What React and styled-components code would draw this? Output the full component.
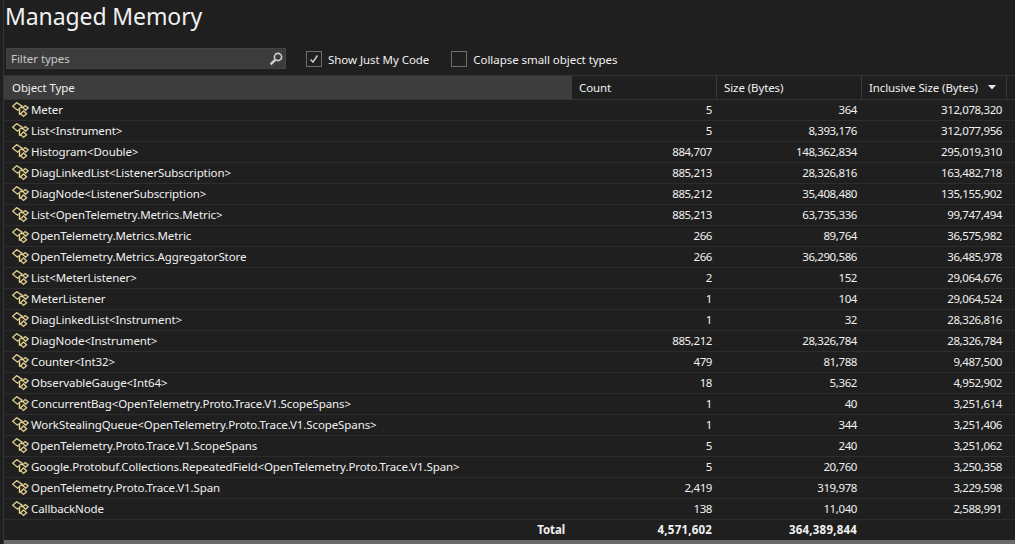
import React from 'react';
import styled, { createGlobalStyle } from 'styled-components';

const rows = [
	['Meter', '5', '364', '312,078,320'],
	['List<Instrument>', '5', '8,393,176', '312,077,956'],
	['Histogram<Double>', '884,707', '148,362,834', '295,019,310'],
	['DiagLinkedList<ListenerSubscription>', '885,213', '28,326,816', '163,482,718'],
	['DiagNode<ListenerSubscription>', '885,212', '35,408,480', '135,155,902'],
	['List<OpenTelemetry.Metrics.Metric>', '885,213', '63,735,336', '99,747,494'],
	['OpenTelemetry.Metrics.Metric', '266', '89,764', '36,575,982'],
	['OpenTelemetry.Metrics.AggregatorStore', '266', '36,290,586', '36,485,978'],
	['List<MeterListener>', '2', '152', '29,064,676'],
	['MeterListener', '1', '104', '29,064,524'],
	['DiagLinkedList<Instrument>', '1', '32', '28,326,816'],
	['DiagNode<Instrument>', '885,212', '28,326,784', '28,326,784'],
	['Counter<Int32>', '479', '81,788', '9,487,500'],
	['ObservableGauge<Int64>', '18', '5,362', '4,952,902'],
	['ConcurrentBag<OpenTelemetry.Proto.Trace.V1.ScopeSpans>', '1', '40', '3,251,614'],
	['WorkStealingQueue<OpenTelemetry.Proto.Trace.V1.ScopeSpans>', '1', '344', '3,251,406'],
	['OpenTelemetry.Proto.Trace.V1.ScopeSpans', '5', '240', '3,251,062'],
	['Google.Protobuf.Collections.RepeatedField<OpenTelemetry.Proto.Trace.V1.Span>', '5', '20,760', '3,250,358'],
	['OpenTelemetry.Proto.Trace.V1.Span', '2,419', '319,978', '3,229,598'],
	['CallbackNode', '138', '11,040', '2,588,991'],
];

const GlobalStyle = createGlobalStyle`
	html, body {
		margin: 0;
		height: 100%;
		background: #1f1f1f;
		overflow: hidden;
	}
`;

const Page = styled.div`
	display: flex;
	flex-direction: column;
	width: 1015px;
	height: 544px;
	box-sizing: border-box;
	padding-left: 3px;
	background: #1f1f1f;
	color: #f1f1f1;
	font-family: "Noto Sans", "Open Sans", sans-serif;
	font-size: 11.5px;
	letter-spacing: -0.1px;
`;

const Content = styled.div`
	flex: 1;
	display: flex;
	flex-direction: column;
	min-height: 0;
	border-left: 1px solid #333;
`;

const Title = styled.h1`
	margin: 0;
	height: 48px;
	padding-left: 1px;
	font-size: 23px;
	font-weight: 400;
	line-height: 32px;
	letter-spacing: -0.1px;
`;

const Toolbar = styled.div`
	display: flex;
	align-items: flex-start;
	height: 27px;
	padding-left: 2px;
	letter-spacing: -0.05px;
`;

const Search = styled.div`
	display: flex;
	align-items: center;
	justify-content: space-between;
	box-sizing: border-box;
	width: 280px;
	height: 21px;
	padding: 0 1px 0 4px;
	background: #3c3c3c;
	border: 1px solid #434343;
	color: #c8c8c8;
`;

const Check = styled.label`
	display: flex;
	align-items: center;
	gap: 6px;
	height: 22px;
	margin-left: ${(p) => p.$gap}px;
`;

const Box = styled.span`
	display: flex;
	align-items: center;
	justify-content: center;
	box-sizing: border-box;
	width: 16px;
	height: 16px;
	border: 1px solid #6e6e6e;
`;

const Row = styled.div`
	display: grid;
	grid-template-columns: 568px 145px 145px 145px 8px;
	height: ${(p) => p.$height}px;
	box-sizing: border-box;
	border-bottom: ${(p) => (p.$plain ? 'none' : '1px solid #2d2d2d')};
`;

const HeaderRow = styled(Row)`
	border-top: 1px solid #333;
	border-bottom: 1px solid #333;
`;

const HeaderCell = styled.div`
	display: flex;
	align-items: center;
	gap: 10px;
	padding: 0 0 1px ${(p) => (p.$first ? '8px' : '7px')};
	background: ${(p) => (p.$first ? '#3d3d3d' : 'transparent')};
	border-right: ${(p) => (p.$first ? 'none' : '1px solid #3a3a3a')};
`;

const NameCell = styled.div`
	display: flex;
	align-items: center;
	gap: 2px;
	padding: 0 0 1px 8px;
	white-space: nowrap;
`;

const NumCell = styled.div`
	display: flex;
	align-items: center;
	justify-content: flex-end;
	padding: 0 5px 1px 0;
	letter-spacing: ${(p) => (p.$bold ? '0.2px' : '-0.4px')};
	font-weight: ${(p) => (p.$bold ? 700 : 400)};
`;

const TotalLabel = styled(NumCell)`
	padding-right: 7px;
	letter-spacing: -0.1px;
`;

const Spacer = styled.div`
	flex: 1;
`;

const BottomBar = styled.div`
	height: 4px;
	background: #6a6a6a;
`;

const SearchIcon = () => (
	<svg width="16" height="16" viewBox="0 0 16 16" fill="none">
		<circle cx="10" cy="6" r="3.6" stroke="#d0d0d0" strokeWidth="1.6" />
		<path d="M7.2 8.8 2.6 13.4" stroke="#d0d0d0" strokeWidth="2.4" />
	</svg>
);

const CheckMark = () => (
	<svg width="12" height="12" viewBox="0 0 12 12" fill="none">
		<path d="M2.5 6.5 5 9 9.5 2.5" stroke="#c8c8c8" strokeWidth="1.5" />
	</svg>
);

const SortArrow = () => (
	<svg width="8" height="5" viewBox="0 0 8 5">
		<path d="M0 0h8L4 4.500z" fill="#e8e8e8" />
	</svg>
);

// class-diagram glyph in front of each type
const TypeIcon = () => (
	<svg width="17" height="16" viewBox="0 0 17 16" fill="none" strokeWidth="1.4">
		<path d="M7.500 7V12H9.500M9 5.500h2" stroke="#f0dc8c" />
		<path d="M.7 4.200 4.700 .7 10 4.200 5.500 8.200z" stroke="#dcc88e" fill="#1f1f1f" />
		<path d="M11 5.600 13.200 3.600 16.200 5.800 13.600 8.200z" stroke="#dcc88e" fill="#1f1f1f" />
		<path d="M8.700 11.800 11.500 8.900 14.600 11.800 11.500 14.400z" stroke="#dcc88e" fill="#1f1f1f" />
	</svg>
);

const App = () => (
	<Page>
		<GlobalStyle />
		<Content>
			<Title>Managed Memory</Title>
			<Toolbar>
				<Search>
					<span>Filter types</span>
					<SearchIcon />
				</Search>
				<Check $gap={20}>
					<Box><CheckMark /></Box>
					Show Just My Code
				</Check>
				<Check $gap={22}>
					<Box />
					Collapse small object types
				</Check>
			</Toolbar>
			<HeaderRow $height={25}>
				<HeaderCell $first>Object Type</HeaderCell>
				<HeaderCell>Count</HeaderCell>
				<HeaderCell>Size (Bytes)</HeaderCell>
				<HeaderCell>
					Inclusive Size (Bytes)
					<SortArrow />
				</HeaderCell>
			</HeaderRow>
			{rows.map(([name, count, size, inclusive]) => (
				<Row key={name} $height={21}>
					<NameCell>
						<TypeIcon />
						{name}
					</NameCell>
					<NumCell>{count}</NumCell>
					<NumCell>{size}</NumCell>
					<NumCell>{inclusive}</NumCell>
				</Row>
			))}
			<Row $height={19} $plain>
				<TotalLabel $bold>Total</TotalLabel>
				<NumCell $bold>4,571,602</NumCell>
				<NumCell $bold>364,389,844</NumCell>
			</Row>
			<Spacer />
			<BottomBar />
		</Content>
	</Page>
);

export default App;
